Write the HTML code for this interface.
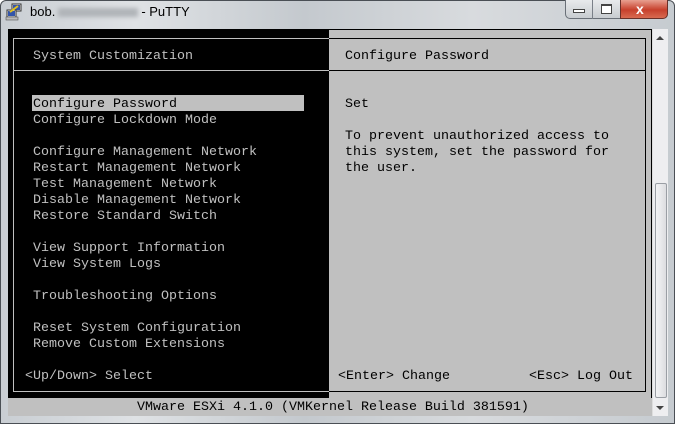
<!DOCTYPE html>
<html><head><meta charset="utf-8"><style>
*{margin:0;padding:0;box-sizing:border-box}
body{width:675px;height:424px;overflow:hidden;position:relative;background:#fff;font-family:"Liberation Mono",monospace}
.win{position:absolute;left:0;top:0;width:675px;height:424px;border:1px solid #4a4f55;border-radius:6px 6px 0 0;background:linear-gradient(90deg,#c9ced3 0%,#dfe2e5 20%,#c4c9ce 45%,#d8dbde 70%,#c6cbd0 100%)}
.title{position:absolute;left:30px;top:4px;font:13px "Liberation Sans",sans-serif;color:#000}
.blur{display:inline-block;width:80px;height:9px;background:#b0b4b8;filter:blur(2px);vertical-align:middle;margin:0 3px}
.abs{position:absolute}
.t{position:absolute;font-size:13.33px;line-height:16px;white-space:pre;color:#c0c0c0}
.d{color:#000}
</style></head><body>
<div class="win"></div>
<svg class="abs" style="left:5px;top:3px" width="20" height="18"><rect x="7" y="1" width="9" height="7" fill="#eee" stroke="#333"/><rect x="8" y="2" width="7" height="5" fill="#3355aa"/><rect x="2" y="7" width="9" height="7" fill="#eee" stroke="#333"/><rect x="3" y="8" width="7" height="5" fill="#3355aa"/><path d="M5 9l8-6" stroke="#e0c020" stroke-width="2"/><rect x="1" y="14" width="12" height="3" fill="#bbb" stroke="#555" stroke-width=".6"/></svg>
<div class="title">bob.<span class="blur"></span>- PuTTY</div>
<div class="abs" style="left:565px;top:0;width:56px;height:19px;border:1px solid #6a7078;border-top:none;border-radius:0 0 0 5px;background:linear-gradient(#e8eaec,#c8ccd0)"></div>
<div class="abs" style="left:592px;top:0;width:1px;height:19px;background:#7a8088"></div>
<div class="abs" style="left:573px;top:9px;width:12px;height:4px;border:1px solid #444;background:#fff"></div>
<div class="abs" style="left:601px;top:4px;width:11px;height:10px;border:1px solid #444;border-top-width:2px;background:#fff"></div>
<div class="abs" style="left:620px;top:0;width:48px;height:19px;border:1px solid #6a3028;border-top:none;border-radius:0 0 5px 0;background:linear-gradient(#e8a090,#c7402c 55%,#d86a50)"></div>
<div class="abs" style="left:636px;top:1px;color:#fff;font:bold 14px 'Liberation Sans',sans-serif">x</div>
<div class="abs" style="left:8px;top:29px;width:644px;height:387px;background:#000"></div>
<div class="abs" style="left:329px;top:30px;width:322px;height:368px;background:#c0c0c0"></div>
<div class="abs" style="left:8px;top:398px;width:644px;height:18px;background:#c0c0c0"></div>
<div class="abs" style="left:13px;top:38px;width:317px;height:354px;border:1px solid #c0c0c0;border-right:none"></div>
<div class="abs" style="left:13px;top:70px;width:316px;height:1px;background:#c0c0c0"></div>
<div class="abs" style="left:329px;top:38px;width:317px;height:354px;border:1px solid #000;border-left:none"></div>
<div class="abs" style="left:329px;top:70px;width:316px;height:1px;background:#000"></div>
<div class="abs" style="left:32px;top:95px;width:272px;height:16px;background:#c0c0c0"></div>
<div class="t" style="left:33px;top:49px">System Customization</div>
<div class="t d" style="left:33px;top:97px">Configure Password</div>
<div class="t" style="left:33px;top:113px">Configure Lockdown Mode

Configure Management Network
Restart Management Network
Test Management Network
Disable Management Network
Restore Standard Switch

View Support Information
View System Logs

Troubleshooting Options

Reset System Configuration
Remove Custom Extensions</div>
<div class="t" style="left:25px;top:369px">&lt;Up/Down&gt; Select</div>
<div class="t d" style="left:345px;top:49px">Configure Password</div>
<div class="t d" style="left:345px;top:97px">Set

To prevent unauthorized access to
this system, set the password for
the user.</div>
<div class="t d" style="left:338px;top:369px">&lt;Enter&gt; Change</div>
<div class="t d" style="left:529px;top:369px">&lt;Esc&gt; Log Out</div>
<div class="t d" style="left:137px;top:400px">VMware ESXi 4.1.0 (VMKernel Release Build 381591)</div>
<div class="abs" style="left:652px;top:29px;width:16px;height:387px;background:#eeeef0;border-left:1px solid #ddd"></div>
<div class="abs" style="left:655px;top:183px;width:12px;height:215px;border:1px solid #9a9ea4;border-radius:2px;background:linear-gradient(90deg,#f4f4f5,#dcdde0)"></div>
<div class="abs" style="left:656px;top:36px;width:0;height:0;border-left:4px solid transparent;border-right:4px solid transparent;border-bottom:4px solid #444"></div>
<div class="abs" style="left:656px;top:406px;width:0;height:0;border-left:4px solid transparent;border-right:4px solid transparent;border-top:4px solid #444"></div>
</body></html>
